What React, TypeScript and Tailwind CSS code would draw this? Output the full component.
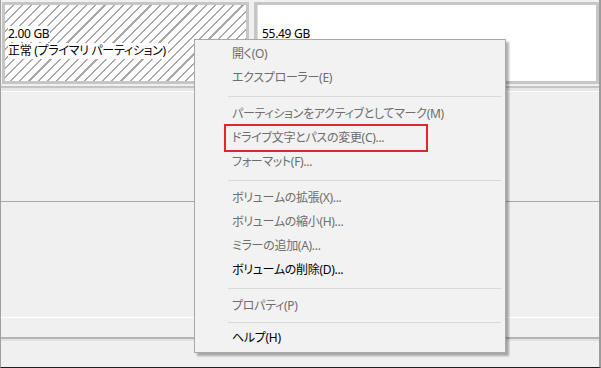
import React from 'react';

type Item = { label: string; enabled?: boolean; highlight?: boolean } | { sep: number };

const items: Item[] = [
  { label: '開く(O)' },
  { label: 'エクスプローラー(E)' },
  { sep: 12 },
  { label: 'パーティションをアクティブとしてマーク(M)' },
  { label: 'ドライブ文字とパスの変更(C)...', highlight: true },
  { label: 'フォーマット(F)...' },
  { sep: 12 },
  { label: 'ボリュームの拡張(X)...' },
  { label: 'ボリュームの縮小(H)...' },
  { label: 'ミラーの追加(A)...' },
  { label: 'ボリュームの削除(D)...', enabled: true },
  { sep: 12 },
  { label: 'プロパティ(P)' },
  { sep: 8 },
  { label: 'ヘルプ(H)', enabled: true },
];

const ContextMenu: React.FC = () => {
  return (
    <div className="absolute left-[193px] top-[39px] w-[312px] bg-[#f2f2f2] border border-[#a8a8a8] py-[2px] shadow-[3px_3px_2px_rgba(0,0,0,0.3)]">
      {items.map((it, i) =>
        'sep' in it ? (
          <div key={i} className={`flex items-center pl-[33px] pr-[4px] ${it.sep === 8 ? 'h-[8px]' : 'h-[12px]'}`}>
            <div className="h-px w-full bg-[#d9d9d9]" />
          </div>
        ) : (
          <div
            key={i}
            className={`relative flex items-center h-[24px] pl-[37px] ${it.enabled ? 'text-[#000]' : 'text-[#6d6d6d]'}`}
          >
            {it.label}
            {it.highlight && (
              <div className="absolute left-[29px] -top-[2px] -bottom-[2px] w-[204px] border-2 border-[#e3262e]" />
            )}
          </div>
        )
      )}
    </div>
  );
};

const App: React.FC = () => {
  return (
    <div className="w-[601px] h-[368px] bg-[#f0f0f0] relative overflow-hidden border-l border-[#a0a0a0] border-r-2 border-r-[#9c9c9c] border-b border-b-[#1e1e1e] text-[12px] tracking-[-0.3px] font-['Noto_Sans','Noto_Sans_CJK_JP',sans-serif] [font-feature-settings:'palt'] leading-none">
      <div className="flex flex-col h-full">
        {/* disks row */}
        <div className="flex h-[86px] pt-[2px] pl-px gap-[5px] bg-[#f0f0f0]">
          <div className="w-[247px] h-[82px] border-[3px] border-[#c6c6c6] bg-[repeating-linear-gradient(135deg,#ffffff_0px,#ffffff_5px,#a8a8a8_5px,#a8a8a8_6.5px)] pt-[21px] pl-[3px] text-[#000] flex flex-col items-start gap-[1px]">
            <span className="bg-white py-[2px] pr-[1px]">2.00 GB</span>
            <span className="bg-white py-[2px] pr-[2px]">正常 (プライマリ パーティション)</span>
          </div>
          <div className="flex-1 h-[82px] border-[3px] border-[#c6c6c6] bg-white">
            <div className="h-full border-l border-[#dcdcdc] pt-[23px] pl-[4px] text-[#000]">55.49 GB</div>
          </div>
        </div>
        <div className="h-[2px] bg-[#c4c4c4]" />
        <div className="h-[3px] bg-[#e6e6e6]" />
        <div className="h-[111px] border-t border-white border-b border-b-[#a8a8a8]" />
        <div className="h-[116px] border-b border-white" />
        <div className="h-[21px] border-b-2 border-b-[#b4b4b4]" />
        <div className="h-[2px] bg-[#e2e2e2]" />
        <div className="flex-1" />
      </div>
      <ContextMenu />
    </div>
  );
};

export default App;
